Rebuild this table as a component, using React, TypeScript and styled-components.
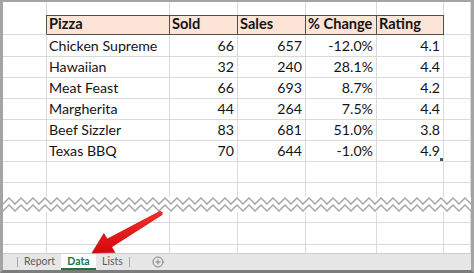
import styled, { createGlobalStyle } from 'styled-components';
import { CirclePlus } from 'lucide-react';

const GlobalStyle = createGlobalStyle`
  html, body { margin: 0; padding: 0; background: #fff; }
  * { box-sizing: border-box; }
`

const COLS = '44px 123px 68px 68px 71px 67px 27px'
const GRID = '#dadada'
const EDGE = '#4f4f4f'

const Page = styled.div`
  position: relative;
  width: 474px;
  height: 273px;
  display: flex;
  flex-direction: column;
  background: #fff;
  border-style: solid;
  border-color: #a4a4a4 #a4a4a4 #7c7c7c #a4a4a4;
  border-width: 2px 3px 3px 3px;
  font-family: Lato, "Liberation Sans", sans-serif;
  overflow: hidden;
`

const Row = styled.div<{ $h: number }>`
  display: grid;
  grid-template-columns: ${COLS};
  height: ${p => p.$h}px;
  flex: none;
`

const Cell = styled.div<{ $num?: boolean; $open?: boolean; $edge?: boolean }>`
  position: relative;
  display: flex;
  align-items: flex-end;
  justify-content: ${p => (p.$num ? 'flex-end' : 'flex-start')};
  padding: 0 3px 2px 2px;
  border-right: 1px solid ${p => (p.$edge ? EDGE : GRID)};
  border-bottom: ${p => (p.$open ? 'none' : `1px solid ${GRID}`)};
  font-size: 14.2px;
  line-height: 17px;
  color: #141414;
  white-space: nowrap;
  overflow: hidden;
`

const HeadCell = styled(Cell)`
  background: #fce4d6;
  font-weight: 700;
  font-size: 14.6px;
  border-top: 1px solid ${EDGE};
  border-right-color: ${EDGE};
  border-bottom-color: ${EDGE};
`

const FillHandle = styled.span`
  position: absolute;
  right: 0;
  bottom: 0;
  width: 3px;
  height: 3px;
  background: #2f5f7a;
`

const Tear = styled.svg`
  display: block;
  flex: none;
  width: 468px;
  height: 15px;
  background: #fff;
`

const TabBar = styled.div`
  flex: none;
  height: 17px;
  display: flex;
  align-items: stretch;
  background: #e6e6e6;
  border-top: 1px solid #cdcdcd;
  padding-left: 14px;
  font-size: 10.5px;
`

const Tab = styled.div<{ $active?: boolean; $w: number }>`
  width: ${p => p.$w}px;
  display: flex;
  align-items: center;
  justify-content: center;
  color: ${p => (p.$active ? '#217346' : '#5c5c5c')};
  font-weight: ${p => (p.$active ? 700 : 400)};
  background: ${p => (p.$active ? '#fff' : 'transparent')};
  border-bottom: 2px solid ${p => (p.$active ? '#217346' : 'transparent')};
`

const Sep = styled.span`
  width: 1px;
  margin: 3px 0;
  background: #a8a8a8;
`

const AddSheet = styled.div`
  display: flex;
  align-items: center;
  margin-left: 22px;
  color: #6a6a6a;
`

const ArrowLayer = styled.svg`
  position: absolute;
  top: -2px;
  left: -3px;
  width: 474px;
  height: 273px;
  pointer-events: none;
`

const headers = ['Pizza', 'Sold', 'Sales', '% Change', 'Rating']

const rows = [
  ['Chicken Supreme', '66', '657', '-12.0%', '4.1'],
  ['Hawaiian', '32', '240', '28.1%', '4.4'],
  ['Meat Feast', '66', '693', '8.7%', '4.2'],
  ['Margherita', '44', '264', '7.5%', '4.4'],
  ['Beef Sizzler', '83', '681', '51.0%', '3.8'],
  ['Texas BBQ', '70', '644', '-1.0%', '4.9'],
]

const blank = (h: number, open = false, key?: string) => (
  <Row $h={h} key={key}>
    {Array.from({ length: 7 }).map((_, i) => (
      <Cell key={i} $open={open} />
    ))}
  </Row>
)

const zigzag = (y0: number) => {
  const pts: string[] = []
  for (let x = -6, i = 0; x <= 480; x += 6, i++) {
    pts.push(`${x},${i % 2 === 0 ? y0 : y0 + 6}`)
  }
  return pts.join(' ')
}

export default function App() {
  return (
    <>
      <GlobalStyle />
      <Page>
        {/* rows above the header, open at the bottom where the header box starts */}
        <Row $h={13}>
          <Cell $open />
          {headers.map(h => (
            <Cell key={h} $open />
          ))}
          <Cell $open />
        </Row>

        <Row $h={20}>
          <Cell $edge />
          {headers.map(h => (
            <HeadCell key={h}>{h}</HeadCell>
          ))}
          <Cell />
        </Row>

        {rows.map((r, ri) => (
          <Row $h={ri === 0 ? 22 : 21} key={r[0]}>
            <Cell />
            {r.map((v, ci) => (
              <Cell key={ci} $num={ci > 0}>
                {v}
                {ri === rows.length - 1 && ci === 4 && <FillHandle />}
              </Cell>
            ))}
            <Cell />
          </Row>
        ))}

        {blank(21, false, 'b1')}
        {blank(14, true, 'b2')}

        <Tear viewBox="0 0 468 15">
          <polyline points={zigzag(1)} fill="none" stroke="#a2a2a2" strokeWidth="1.3" />
          <polyline points={zigzag(8)} fill="none" stroke="#a2a2a2" strokeWidth="1.3" />
        </Tear>

        {blank(11, false, 'c1')}
        {blank(22, false, 'c2')}
        {blank(8, true, 'c3')}

        <TabBar>
          <Sep />
          <Tab $w={43}>Report</Tab>
          <Tab $w={35} $active>Data</Tab>
          <Tab $w={33}>Lists</Tab>
          <Sep />
          <AddSheet>
            <CirclePlus size={12} strokeWidth={1.6} />
          </AddSheet>
        </TabBar>

        <ArrowLayer viewBox="0 0 474 273">
          <defs>
            <linearGradient id="arrowFill" x1="0" y1="0" x2="0" y2="1">
              <stop offset="0" stopColor="#f8302c" />
              <stop offset="1" stopColor="#d2070c" />
            </linearGradient>
          </defs>
          <polygon
            points="160,211.3 107.2,239.1 103.9,233.4 92,253 114.9,252.6 111.7,246.9 162,214.7 162.4,212.6"
            fill="url(#arrowFill)"
            stroke="#b90408"
            strokeWidth="0.6"
            strokeLinejoin="round"
          />
        </ArrowLayer>
      </Page>
    </>
  )
}
